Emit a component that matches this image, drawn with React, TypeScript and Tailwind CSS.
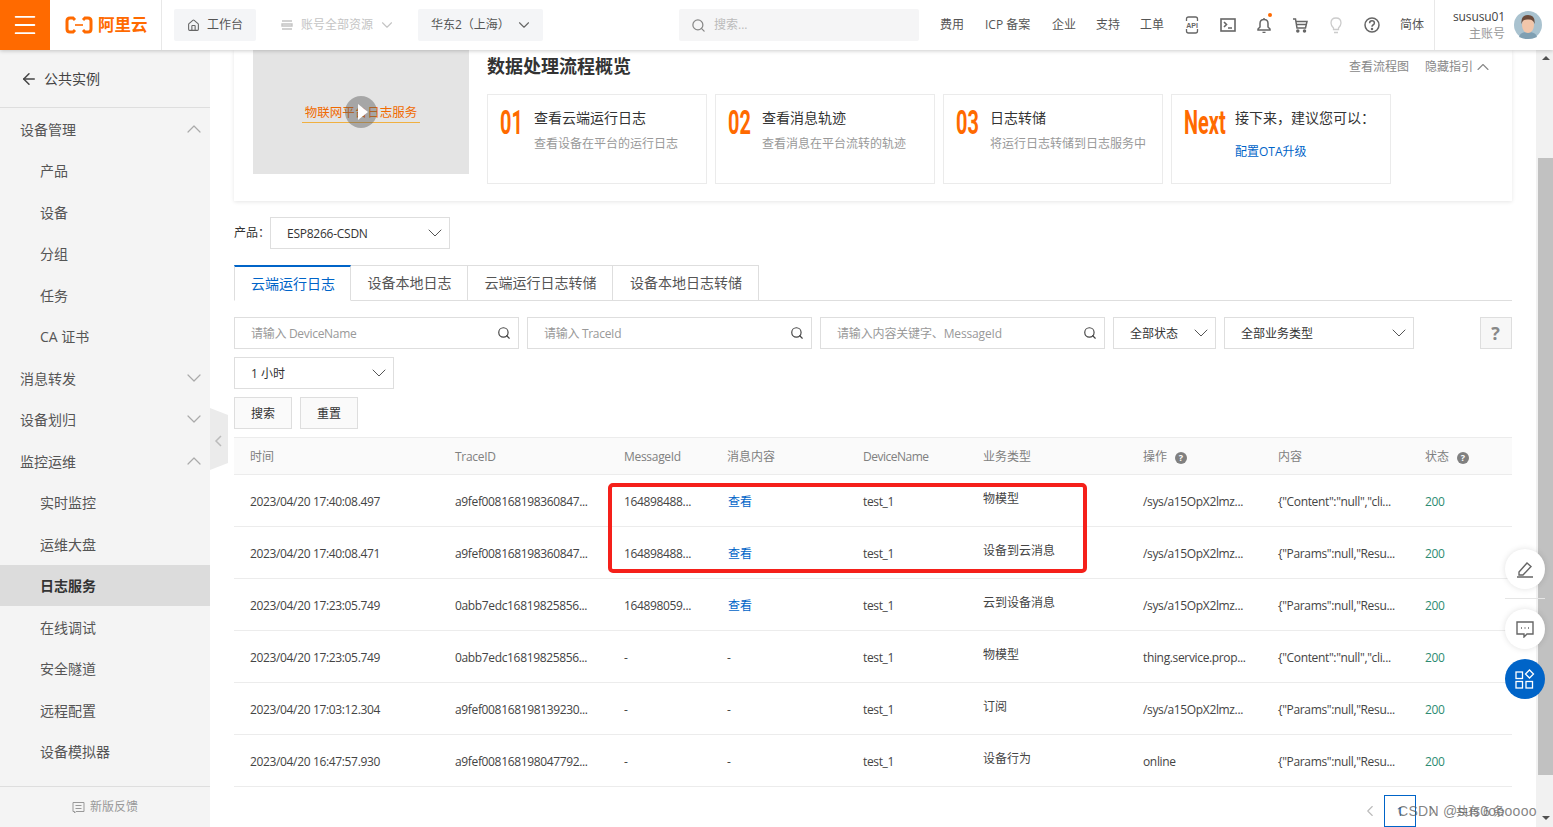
import { ChevronDown, ChevronUp, ChevronLeft, Search, Home, ArrowLeft, Menu } from "lucide-react";

const fontStack = "font-['Open_Sans','Noto_Sans_CJK_SC',sans-serif]";

type NavItem = { name: string; child?: boolean; active?: boolean; open?: boolean; group?: boolean };

const sideNav: NavItem[] = [
  { name: "设备管理", group: true, open: true },
  { name: "产品", child: true },
  { name: "设备", child: true },
  { name: "分组", child: true },
  { name: "任务", child: true },
  { name: "CA 证书", child: true },
  { name: "消息转发", group: true },
  { name: "设备划归", group: true },
  { name: "监控运维", group: true, open: true },
  { name: "实时监控", child: true },
  { name: "运维大盘", child: true },
  { name: "日志服务", child: true, active: true },
  { name: "在线调试", child: true },
  { name: "安全隧道", child: true },
  { name: "远程配置", child: true },
  { name: "设备模拟器", child: true },
];

const steps = [
  { no: "01", title: "查看云端运行日志", desc: "查看设备在平台的运行日志" },
  { no: "02", title: "查看消息轨迹", desc: "查看消息在平台流转的轨迹" },
  { no: "03", title: "日志转储", desc: "将运行日志转储到日志服务中" },
];

const tabs = [
  { name: "云端运行日志", w: "w-[117px]" },
  { name: "设备本地日志", w: "w-[117px]" },
  { name: "云端运行日志转储", w: "w-[145px]" },
  { name: "设备本地日志转储", w: "w-[146px]" },
];

const rows = [
  { time: "2023/04/20 17:40:08.497", trace: "a9fef008168198360847...", msg: "164898488...", view: true, type: "物模型", op: "/sys/a15OpX2lmz...", content: '{"Content":"null","cli...' },
  { time: "2023/04/20 17:40:08.471", trace: "a9fef008168198360847...", msg: "164898488...", view: true, type: "设备到云消息", op: "/sys/a15OpX2lmz...", content: '{"Params":null,"Resu...' },
  { time: "2023/04/20 17:23:05.749", trace: "0abb7edc16819825856...", msg: "164898059...", view: true, type: "云到设备消息", op: "/sys/a15OpX2lmz...", content: '{"Params":null,"Resu...' },
  { time: "2023/04/20 17:23:05.749", trace: "0abb7edc16819825856...", msg: "-", view: false, type: "物模型", op: "thing.service.prop...", content: '{"Content":"null","cli...' },
  { time: "2023/04/20 17:03:12.304", trace: "a9fef008168198139230...", msg: "-", view: false, type: "订阅", op: "/sys/a15OpX2lmz...", content: '{"Params":null,"Resu...' },
  { time: "2023/04/20 16:47:57.930", trace: "a9fef008168198047792...", msg: "-", view: false, type: "设备行为", op: "online", content: '{"Params":null,"Resu...' },
];

const tableCols = "grid grid-cols-[205px_169px_103px_136px_120px_160px_135px_147px_103px]";

function HelpDot() {
  return (
    <span className="ml-[8px] inline-flex h-[12px] w-[12px] items-center justify-center rounded-full bg-[#808080] align-[0px] text-[9px] font-bold leading-none text-white">
      ?
    </span>
  );
}

function Header() {
  return (
    <header className="relative z-20 flex h-[50px] shrink-0 items-center bg-white text-[12px] text-[#555] shadow-[0_1px_4px_rgba(0,0,0,0.2)]">
      <div className="flex h-[50px] w-[50px] items-center justify-center bg-[#ff6a00] text-white">
        <Menu size={28} strokeWidth={1.6} />
      </div>
      <div className="flex h-[50px] w-[112px] items-center border-r border-[#e8e8e8] pl-[15px] text-[#ff6a00]">
        <svg width="28" height="18" viewBox="0 0 28 18" fill="none">
          <path d="M10 4L8 2H5Q2 2 2 5V13Q2 16 5 16H8L10 14" stroke="#ff6a00" strokeWidth="3" />
          <path d="M18 4L20 2H23Q26 2 26 5V13Q26 16 23 16H20L18 14" stroke="#ff6a00" strokeWidth="3" />
          <path d="M10 9H18" stroke="#ff6a00" strokeWidth="1.6" />
        </svg>
        <span className="ml-[5px] text-[16.5px] font-semibold leading-none">阿里云</span>
      </div>
      <div className="ml-[12px] flex h-[32px] w-[82px] items-center rounded-[2px] bg-[#f4f5f7] pl-[13px]">
        <Home size={13} className="text-[#666]" />
        <span className="ml-[7px]">工作台</span>
      </div>
      <div className="ml-[25px] flex w-[137px] items-center text-[#c4c4c4]">
        <svg width="12" height="12" viewBox="0 0 12 12" fill="none" stroke="#c4c4c4" strokeWidth="1.4">
          <path d="M1 2H11M1 5H11V7H1ZM1 10H11" />
        </svg>
        <span className="ml-[8px]">账号全部资源</span>
        <ChevronDown size={18} strokeWidth={1.5} className="ml-[5px]" />
      </div>
      <div className="flex h-[32px] w-[125px] items-center rounded-[2px] bg-[#f4f5f7] pl-[13px]">
        <span>华东2（上海）</span>
        <ChevronDown size={18} strokeWidth={1.5} className="ml-[5px] text-[#666]" />
      </div>
      <div className="ml-[136px] flex h-[32px] w-[240px] items-center rounded-[2px] bg-[#f5f5f6] pl-[12px] text-[#bbb]">
        <Search size={15} className="text-[#888]" />
        <span className="ml-[8px]">搜索...</span>
      </div>
      <nav className="ml-[21px] flex items-center gap-[20px]">
        <span>费用</span>
        <span className="w-[48px] whitespace-nowrap pl-[1px]">ICP 备案</span>
        <span>企业</span>
        <span>支持</span>
        <span>工单</span>
      </nav>
      <div className="ml-[18px] flex items-center text-[#666]">
        <span className="flex w-[20px] justify-center">
          <svg width="18" height="18" viewBox="0 0 18 18" fill="none" stroke="#666" strokeWidth="1.3">
            <path d="M3.5 5V3Q3.5 1 5.5 1H12.5Q14.5 1 14.5 3V5M3.5 13V15Q3.5 17 5.5 17H12.5Q14.5 17 14.5 15V13" />
            <text x="9" y="11.5" textAnchor="middle" fontSize="7" fontWeight="700" fill="#666" stroke="none" fontFamily="Liberation Sans, sans-serif">API</text>
          </svg>
        </span>
        <span className="ml-[16px] flex w-[20px] justify-center">
          <svg width="16" height="14" viewBox="0 0 16 14" fill="none" stroke="#666" strokeWidth="1.6">
            <rect x="1" y="1" width="14" height="12" />
            <path d="M4 4L6.5 6.5L4 9M8 10H12" />
          </svg>
        </span>
        <span className="relative ml-[16px] flex w-[20px] justify-center">
          <svg width="14" height="16" viewBox="0 0 14 16" fill="none" stroke="#666" strokeWidth="1.5">
            <path d="M1 13H13V12L11 10V6.5Q11 2.5 7 2.5Q3 2.5 3 6.5V10L1 12ZM5.5 15.5H8.5M7 1V2.5" />
          </svg>
          <span className="absolute right-[2px] top-[-4px] h-[4px] w-[4px] rounded-full bg-[#ff6a00]" />
        </span>
        <span className="ml-[16px] flex w-[20px] justify-center">
          <svg width="16" height="15" viewBox="0 0 16 15" fill="none" stroke="#666" strokeWidth="1.5">
            <path d="M1 1H3.5L5 10H13.5L15 3.5H4" />
            <path d="M4.5 6.5H14" />
            <circle cx="5.8" cy="13" r="1" fill="#666" />
            <circle cx="12.5" cy="13" r="1" fill="#666" />
          </svg>
        </span>
        <span className="ml-[16px] flex w-[20px] justify-center">
          <svg width="12" height="17" viewBox="0 0 12 17" fill="none" stroke="#ccc" strokeWidth="1.3">
            <path d="M3.5 11Q1 8.5 1 6Q1 1 6 1Q11 1 11 6Q11 8.5 8.5 11V12.5H3.5ZM4 15.5H8" />
          </svg>
        </span>
        <span className="ml-[16px] flex w-[20px] justify-center">
          <svg width="16" height="16" viewBox="0 0 16 16" fill="none" stroke="#666" strokeWidth="1.5">
            <circle cx="8" cy="8" r="7" />
            <path d="M5.6 6.2Q5.6 3.8 8 3.8Q10.4 3.8 10.4 6Q10.4 7.2 9 8Q8 8.6 8 9.8" />
            <circle cx="8" cy="12" r="0.5" fill="#666" />
          </svg>
        </span>
      </div>
      <span className="ml-[18px]">简体</span>
      <div className="ml-[10px] flex h-[50px] flex-1 items-center border-l border-[#e8e8e8] pl-[19px]">
        <div className="flex w-[51px] flex-col items-end leading-[17px]">
          <span className="tracking-[-0.1px] text-[#444]">sususu01</span>
          <span className="text-[#999]">主账号</span>
        </div>
        <svg className="ml-[9px]" width="28" height="28" viewBox="0 0 28 28">
          <circle cx="14" cy="14" r="14" fill="#a9c2cf" />
          <path d="M5 26Q6 21 14 21Q22 21 23 26Q19 28 14 28Q9 28 5 26Z" fill="#7f9fb2" />
          <ellipse cx="14" cy="14" rx="6" ry="8" fill="#f2c6aa" />
          <path d="M7.5 13Q6.5 4 14 4Q21.5 4 20.5 13Q19.5 8 14 8.5Q8.5 8 7.5 13Z" fill="#6b4a3a" />
        </svg>
      </div>
    </header>
  );
}

function Sidebar() {
  return (
    <aside className="flex w-[210px] shrink-0 flex-col bg-[#f4f4f4] text-[14px] text-[#555]">
      <div className="flex h-[58px] items-center border-b border-[#dedede] pl-[20px] text-[#444]">
        <ArrowLeft size={18} strokeWidth={2} />
        <span className="ml-[6px]">公共实例</span>
      </div>
      <ul className="flex-1">
        {sideNav.map((item) => (
          <li
            key={item.name}
            className={
              "flex h-[41.5px] items-center justify-between pr-[4px] " +
              (item.child ? "pl-[40px] " : "pl-[20px] ") +
              (item.active ? "bg-[#dcdcdc] font-bold text-[#333]" : "")
            }
          >
            <span className="pt-[1px]">{item.name}</span>
            {item.group &&
              (item.open ? (
                <ChevronUp size={24} strokeWidth={1.2} className="text-[#aaa]" />
              ) : (
                <ChevronDown size={24} strokeWidth={1.2} className="text-[#aaa]" />
              ))}
          </li>
        ))}
      </ul>
      <div className="flex h-[41px] items-center justify-center border-t border-[#dedede] text-[12px] text-[#999]">
        <svg width="13" height="13" viewBox="0 0 13 13" fill="none" stroke="#999">
          <path d="M1 1.5H12V10.5H4L2.5 12V10.5H1ZM3.5 4.5H9.5M3.5 7.5H9.5" />
        </svg>
        <span className="ml-[5px]">新版反馈</span>
      </div>
    </aside>
  );
}

function Guide() {
  return (
    <section className="flex h-[151px] gap-[18px] bg-white pl-[19px] shadow-[0_1px_4px_rgba(0,0,0,0.1)]">
      <div className="relative flex h-[124px] w-[216px] shrink-0 items-center justify-center bg-[#e4e4e4]">
        <span className="mt-[3px] border-b border-[#f0b040] px-[3px] pb-[1px] text-[12.5px] leading-[16px] text-[#f06a00]">物联网平台日志服务</span>
        <span className="absolute left-[92px] top-[46px] flex h-[32px] w-[32px] items-center justify-center rounded-full bg-[rgba(90,90,90,0.45)]">
          <span className="ml-[3px] h-0 w-0 border-y-[8px] border-l-[10px] border-y-transparent border-l-white" />
        </span>
      </div>
      <div className="flex-1">
        <div className="flex h-[44px] items-start justify-between pr-[19px]">
          <h2 className="pt-[3px] text-[18px] font-bold leading-[26px] text-[#333]">数据处理流程概览</h2>
          <div className="flex items-center pt-[7px] text-[12px] leading-[16px] text-[#888]">
            <span>查看流程图</span>
            <span className="ml-[16px]">隐藏指引</span>
            <ChevronUp size={20} strokeWidth={1.3} />
          </div>
        </div>
        <div className="flex gap-[8px]">
          {steps.map((s) => (
            <div key={s.no} className="flex h-[90px] w-[220px] border border-[#ebebeb] pl-[12px] pt-[12px]">
              <span className="w-[34px] origin-left scale-x-[0.585] font-['Roboto',sans-serif] text-[34px] font-bold leading-[30px] text-[#ff6a00]">
                {s.no}
              </span>
              <div className="pt-[1px]">
                <div className="text-[14px] leading-[20px] text-[#333]">{s.title}</div>
                <div className="mt-[8px] text-[12px] leading-[16px] text-[#999]">{s.desc}</div>
              </div>
            </div>
          ))}
          <div className="flex h-[90px] w-[220px] border border-[#ebebeb] pl-[12px] pt-[12px]">
            <span className="w-[51px] origin-left scale-x-[0.585] font-['Roboto',sans-serif] text-[34px] font-bold leading-[30px] text-[#ff6a00]">
              Next
            </span>
            <div className="pt-[1px]">
              <div className="text-[14px] leading-[20px] text-[#333]">接下来，建议您可以：</div>
              <div className="mt-[16px] text-[12px] leading-[16px] text-[#0064c8]">配置OTA升级</div>
            </div>
          </div>
        </div>
      </div>
    </section>
  );
}

function Field({ w, text, tone, icon }: { w: string; text: string; tone?: string; icon: "search" | "down" }) {
  return (
    <div className={"flex h-[32px] shrink-0 items-center justify-between border border-[#dedede] bg-white pl-[16px] pr-[8px] text-[12px] " + w + " " + (tone ?? "text-[#333]")}>
      <span className="pt-[2px]">{text}</span>
      {icon === "search" ? (
        <Search size={14} strokeWidth={2} className="mr-[-1px] text-[#444]" />
      ) : (
        <ChevronDown size={24} strokeWidth={1} className="mr-[-6px] text-[#555]" />
      )}
    </div>
  );
}

function Filters() {
  return (
    <>
      <div className="mt-[16px] flex items-center text-[12px] text-[#333]">
        <span className="w-[36px]">产品：</span>
        <Field w="w-[180px]" text="ESP8266-CSDN" tone="text-[#333] tracking-[-0.25px]" icon="down" />
      </div>
      <div className="mt-[16px] flex h-[36px] border-b border-[#dedede]">
        {tabs.map((t, i) => (
          <div
            key={t.name}
            className={
              "flex h-[36px] items-center justify-center border-r border-[#dedede] pb-[1px] pl-[1px] text-[14px] " +
              t.w +
              (i === 0
                ? " border-t-2 border-l border-b border-t-[#0064c8] border-b-white bg-white text-[#0064c8]"
                : " border-t pb-[3px] text-[#555]")
            }
          >
            {t.name}
          </div>
        ))}
      </div>
      <div className="mt-[16px] flex gap-[8px]">
        <Field w="w-[285px]" text="请输入 DeviceName" tone="text-[#999] tracking-[-0.3px]" icon="search" />
        <Field w="w-[285px]" text="请输入 TraceId" tone="text-[#999] tracking-[-0.3px]" icon="search" />
        <Field w="w-[285px]" text="请输入内容关键字、MessageId" tone="text-[#999] tracking-[-0.15px]" icon="search" />
        <Field w="w-[103px]" text="全部状态" icon="down" />
        <Field w="w-[190px]" text="全部业务类型" icon="down" />
        <div className="ml-auto flex h-[32px] w-[32px] items-center justify-center border border-[#dedede] bg-[#f7f7f7] pr-[1px] text-[18px] font-bold text-[#888]">
          ?
        </div>
      </div>
      <div className="mt-[8px]">
        <Field w="w-[160px]" text="1 小时" icon="down" />
      </div>
      <div className="mt-[8px] flex gap-[8px]">
        <button className="h-[32px] w-[58px] border border-[#dedede] bg-[#fafafa] pt-[2px] text-[12px] text-[#333]">搜索</button>
        <button className="h-[32px] w-[58px] border border-[#dedede] bg-[#fafafa] pt-[2px] text-[12px] text-[#333]">重置</button>
      </div>
    </>
  );
}

function LogTable() {
  return (
    <div className="relative mt-[8px] text-[12px]">
      <div className={tableCols + " h-[38px] items-center border-y border-[#ececec] bg-[#fafafa] text-[#808080] [&>div]:pl-[16px] [&>div]:pt-[2px]"}>
        <div>时间</div>
        <div className="tracking-[-0.3px]">TraceID</div>
        <div className="tracking-[-0.3px]">MessageId</div>
        <div>消息内容</div>
        <div className="tracking-[-0.5px]">DeviceName</div>
        <div>业务类型</div>
        <div>操作<HelpDot /></div>
        <div>内容</div>
        <div>状态<HelpDot /></div>
      </div>
      {rows.map((r, i) => (
        <div key={i} className={tableCols + " h-[52px] items-center border-b border-[#ececec] tracking-[-0.35px] text-[#444] [&>div]:pl-[16px] [&>div]:pt-[2px]"}>
          <div>{r.time}</div>
          <div>{r.trace}</div>
          <div>{r.msg}</div>
          <div className={r.view ? "ml-[1px] tracking-normal text-[#0064c8]" : ""}>{r.view ? "查看" : "-"}</div>
          <div>test_1</div>
          <div className="pb-[6px] tracking-normal">{r.type}</div>
          <div>{r.op}</div>
          <div>{r.content}</div>
          <div className="text-[#2e8b72]">200</div>
        </div>
      ))}
      {/* red marker drawn over the screenshot */}
      <div className="absolute left-[374px] top-[46px] h-[90px] w-[479px] rounded-[5px] border-[4px] border-[#f5201a]" />
    </div>
  );
}

function Pagination() {
  return (
    <div className="mt-[8px] flex h-[32px] items-center justify-end text-[12px] text-[#888]">
      <ChevronLeft size={18} strokeWidth={1.5} className="mr-[5px] text-[#bbb]" />
      <span className="flex h-[32px] w-[32px] items-center justify-center border border-[#0064c8] pt-[1px] text-[#0064c8]">1</span>
      <span className="flex h-[32px] w-[32px] items-center justify-center text-[#bbb]">
        <ChevronLeft size={18} strokeWidth={1.5} className="rotate-180" />
      </span>
      <span className="ml-[8px] w-[56px] pt-[2px]">共有 6 条</span>
    </div>
  );
}

export default function App() {
  return (
    <div className={"relative flex h-[827px] w-[1553px] flex-col overflow-hidden bg-white " + fontStack}>
      <Header />
      <div className="flex min-h-0 flex-1">
        <Sidebar />
        <main className="min-w-0 flex-1 overflow-hidden pl-[24px] pr-[24px]">
          <Guide />
          <Filters />
          <LogTable />
          <Pagination />
        </main>
        <div className="flex w-[17px] shrink-0 flex-col items-end bg-[#f1f1f1]">
          <div className="flex h-[108px] w-[15px] justify-center pt-[6px]">
            <span className="h-0 w-0 border-x-[4px] border-b-[4px] border-x-transparent border-b-[#505050]" />
          </div>
          <div className="h-[617px] w-[15px] bg-[#c1c1c1]" />
          <div className="flex w-[15px] flex-1 items-end justify-center pb-[7px]">
            <span className="h-0 w-0 border-x-[4px] border-t-[4px] border-x-transparent border-t-[#505050]" />
          </div>
        </div>
      </div>

      {/* sidebar collapse handle */}
      <svg className="absolute left-[210px] top-[408px]" width="18" height="62" viewBox="0 0 18 62">
        <path d="M0 0L18 7V55L0 62Z" fill="#ebebeb" />
        <path d="M11 28L6 33L11 38" fill="none" stroke="#bbb" strokeWidth="1.5" />
      </svg>

      {/* floating tools */}
      <div className="absolute left-[1505px] top-[549px] flex w-[40px] flex-col items-center">
        <div className="flex h-[40px] w-[40px] items-center justify-center rounded-full bg-white shadow-[0_0_6px_rgba(0,0,0,0.12)]">
          <svg width="18" height="18" viewBox="0 0 18 18" fill="none" stroke="#666" strokeWidth="1.4">
            <path d="M3 12L11 3L15 6.5L7 15H3ZM1 17H17" />
          </svg>
        </div>
        <div className="mt-[9px] h-px w-[40px] bg-[#e5e5e5]" />
        <div className="mt-[10px] flex h-[40px] w-[40px] items-center justify-center rounded-full bg-white shadow-[0_0_6px_rgba(0,0,0,0.12)]">
          <svg width="18" height="17" viewBox="0 0 18 17" fill="none" stroke="#666" strokeWidth="1.4">
            <path d="M1 1H17V13H11L8 16V13H1Z" />
            <path d="M5 7H6M8.5 7H9.5M12 7H13" strokeWidth="1.6" />
          </svg>
        </div>
        <div className="mt-[10px] flex h-[40px] w-[40px] items-center justify-center rounded-full bg-[#0064c8]">
          <svg width="20" height="20" viewBox="0 0 20 20" fill="none" stroke="#fff" strokeWidth="1.3">
            <rect x="1" y="3" width="6.5" height="6.5" />
            <rect x="1" y="12.5" width="6.5" height="6.5" />
            <rect x="11" y="12.5" width="6.5" height="6.5" />
            <path d="M14.5 1L18.5 5L14.5 9L10.5 5Z" />
          </svg>
        </div>
      </div>

      {/* blog watermark over the screenshot */}
      <span className="absolute left-[1398px] top-[801px] whitespace-nowrap font-['Liberation_Sans',sans-serif] text-[14px] leading-[20px] tracking-[0.3px] text-[rgba(90,90,90,0.75)]">
        CSDN @sus0oooooo
      </span>
    </div>
  );
}
